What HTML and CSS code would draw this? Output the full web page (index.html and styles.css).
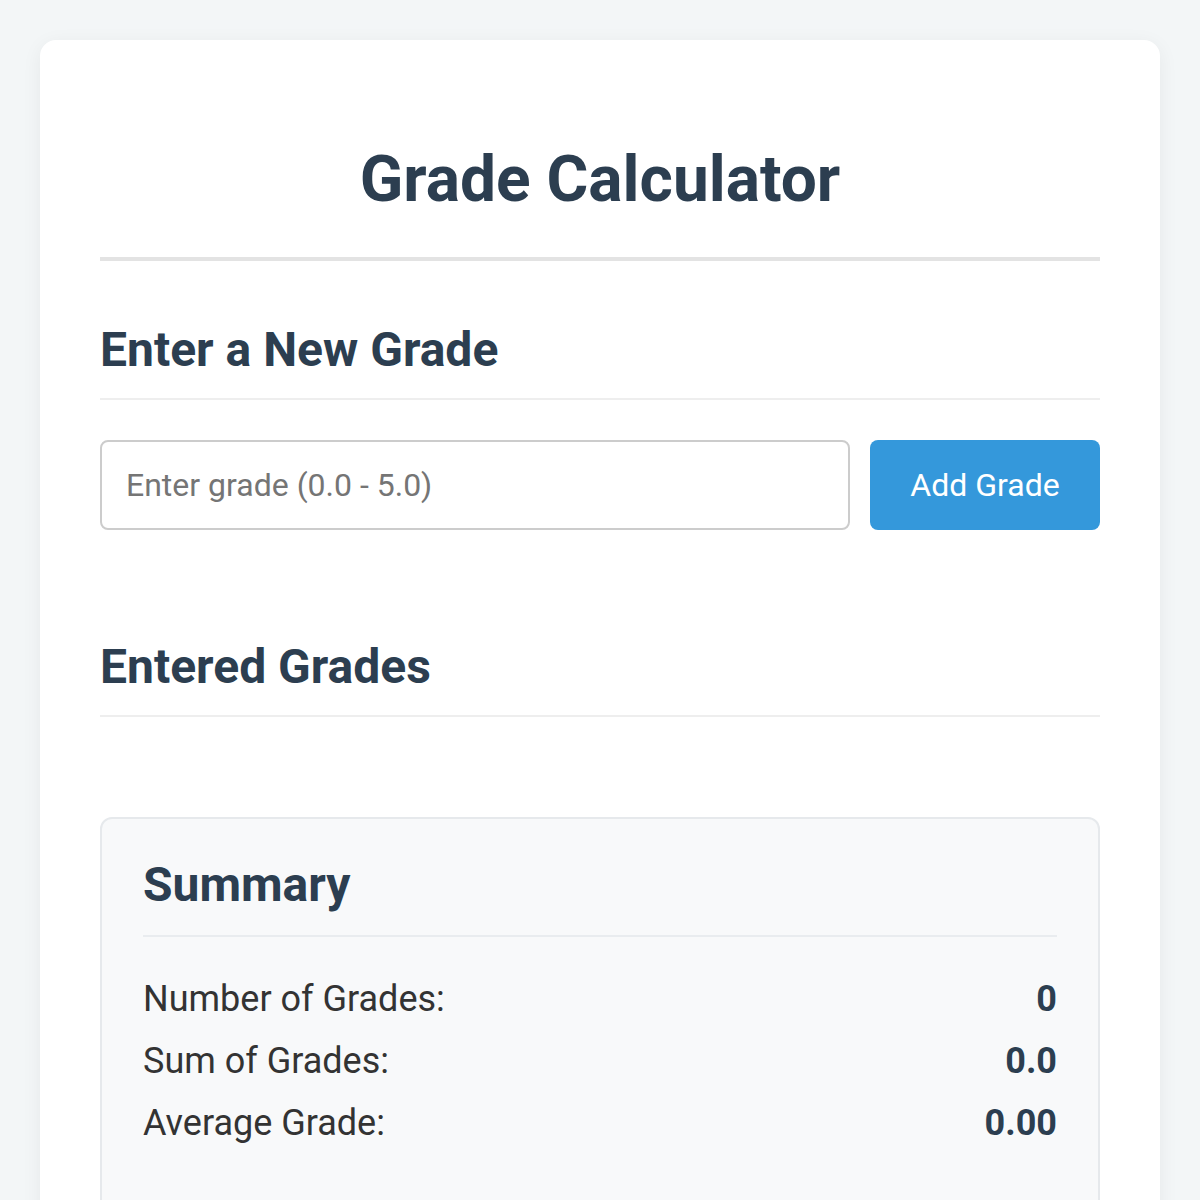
FILE: index.html
```html
<!DOCTYPE html>
<html lang="en">
<head>
    <meta charset="UTF-8">
    <meta name="viewport" content="width=device-width, initial-scale=1.0">
    <title>Grade Calculator</title>
    <link rel="stylesheet" href="styles.css">
</head>
<body>
    <div class="container">
        <h1>Grade Calculator</h1>

        <div class="section">
            <h2>Enter a New Grade</h2>
            <form id="gradeForm" class="grade-form">
                <input type="number" id="gradeInput" step="0.1" min="0" max="5" placeholder="Enter grade (0.0 - 5.0)">
                <button type="submit">Add Grade</button>
            </form>
        </div>

        <div class="section">
            <h2>Entered Grades</h2>
            <ul id="gradeList" class="grade-list"></ul>
        </div>

        <div class="summary">
            <h3>Summary</h3>
            <div class="summary-row">
                <span>Number of Grades:</span>
                <span class="value" id="count">0</span>
            </div>
            <div class="summary-row">
                <span>Sum of Grades:</span>
                <span class="value" id="sum">0.0</span>
            </div>
            <div class="summary-row">
                <span>Average Grade:</span>
                <span class="value" id="average">0.00</span>
            </div>
        </div>
    </div>
</body>
</html>
```

FILE: styles.css
```css
body {
    font-family: Roboto, "Liberation Sans", Arial, sans-serif;
    color: #333;
    margin: 0;
    padding: 40px;
    background-color: #f3f6f7;
}
.container {
    background: white;
    border-radius: 16px;
    padding: 42px 60px 60px;
    box-shadow: 0 4px 20px rgba(0, 0, 0, 0.06);
}
h1 {
    color: #2c3e50;
    text-align: center;
    font-size: 64px;
    margin: 60px 0 60px;
    padding-bottom: 40px;
    border-bottom: 4px solid #e3e3e3;
}
h2 {
    color: #2c3e50;
    font-size: 48px;
    margin: 0 0 40px;
    padding-bottom: 20px;
    border-bottom: 2px solid #eeeeee;
}
.section {
    margin-bottom: 108px;
}
.grade-form {
    display: flex;
    gap: 20px;
}
.grade-form input {
    flex: 1;
    height: 90px;
    box-sizing: border-box;
    padding: 0 24px;
    border: 2px solid #cccccc;
    border-radius: 8px;
    font-family: inherit;
    font-size: 32px;
    color: #333;
}
.grade-form input::placeholder {
    color: #757575;
}
.grade-form button {
    width: 230px;
    height: 90px;
    background-color: #3498db;
    color: white;
    border: none;
    border-radius: 8px;
    font-family: inherit;
    font-size: 32px;
    cursor: pointer;
}
.grade-form button:hover {
    background-color: #2980b9;
}
.grade-list {
    list-style: none;
    margin: 0;
    padding: 0;
}
.section:nth-of-type(2) {
    margin-bottom: 100px;
}
.section:nth-of-type(2) h2 {
    margin-bottom: 0;
}
.summary {
    background: #f8f9fa;
    border: 2px solid #e6e9ec;
    border-radius: 12px;
    padding: 37px 41px 60px;
}
.summary h3 {
    color: #2c3e50;
    font-size: 48px;
    margin: 0 0 31px;
    padding-bottom: 22px;
    border-bottom: 2px solid #e9ecef;
}
.summary-row {
    display: flex;
    justify-content: space-between;
    font-size: 36px;
    line-height: 62px;
}
.summary-row .value {
    font-weight: bold;
    color: #2c3e50;
}
```
